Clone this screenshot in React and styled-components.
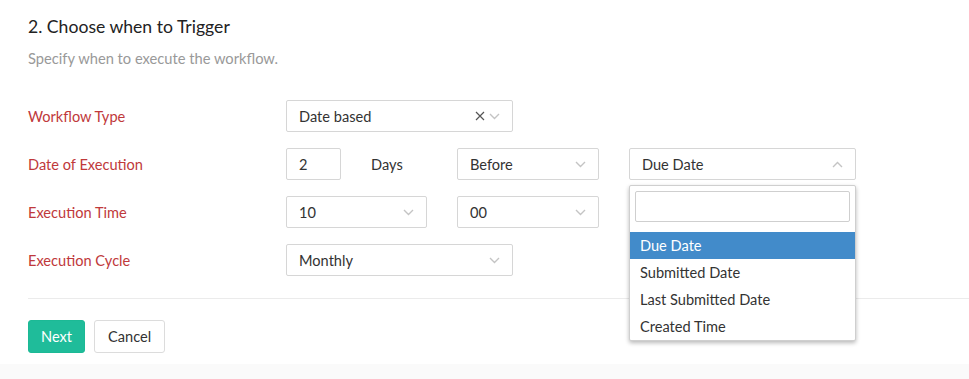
import styled, { createGlobalStyle } from "styled-components";

const GlobalStyle = createGlobalStyle`
  body {
    margin: 0;
    background: #fff;
    font-family: "Lato", "Liberation Sans", sans-serif;
    color: #333;
  }
`;

const Chevron = ({ up }) => (
  <svg width="11" height="7" viewBox="0 0 11 7">
    <path
      d={up ? "M1 6 L5.5 1.5 L10 6" : "M1 1 L5.5 5.5 L10 1"}
      fill="none"
      stroke="#c4c4c4"
      strokeWidth="1.4"
    />
  </svg>
);

const Cross = () => (
  <svg width="10" height="10" viewBox="0 0 10 10">
    <path d="M1 1 L9 9 M9 1 L1 9" stroke="#555" strokeWidth="1.2" />
  </svg>
);

export default function App() {
  return (
    <Page>
      <GlobalStyle />
      <Header>
        <h2>2. Choose when to Trigger</h2>
        <p>Specify when to execute the workflow.</p>
      </Header>

      <Form>
        <Label>Workflow Type</Label>
        <Controls>
          <Select $width={227}>
            <span>Date based</span>
            <Icons>
              <Cross />
              <Chevron />
            </Icons>
          </Select>
        </Controls>

        <Label>Date of Execution</Label>
        <Controls>
          <Cell>
            <NumberBox>2</NumberBox>
            <Unit>Days</Unit>
          </Cell>
          <Select $width={142}>
            <span>Before</span>
            <Chevron />
          </Select>
          <Anchor>
            <Select $width={227}>
              <span>Due Date</span>
              <Chevron up />
            </Select>
            <Dropdown>
              <Search />
              <Options>
                <Option $active>Due Date</Option>
                <Option>Submitted Date</Option>
                <Option>Last Submitted Date</Option>
                <Option>Created Time</Option>
              </Options>
            </Dropdown>
          </Anchor>
        </Controls>

        <Label>Execution Time</Label>
        <Controls>
          <Select $width={141}>
            <span>10</span>
            <Chevron />
          </Select>
          <Select $width={142}>
            <span>00</span>
            <Chevron />
          </Select>
        </Controls>

        <Label>Execution Cycle</Label>
        <Controls>
          <Select $width={227}>
            <span>Monthly</span>
            <Chevron />
          </Select>
        </Controls>
      </Form>

      <Divider />

      <Actions>
        <Button $primary>Next</Button>
        <Button>Cancel</Button>
      </Actions>

      <Footer />
    </Page>
  );
}

const Page = styled.div`
  width: 969px;
  height: 379px;
  overflow: hidden;
  display: flex;
  flex-direction: column;
`;

const Header = styled.div`
  padding: 16px 28px 0;

  h2 {
    margin: 0;
    font-size: 17.6px;
    line-height: 22px;
    font-weight: 400;
    color: #222;
  }

  p {
    margin: 10px 0 0;
    font-size: 14.7px;
    line-height: 20px;
    color: #999;
  }
`;

const Form = styled.div`
  margin-top: 32px;
  padding-left: 28px;
  display: grid;
  grid-template-columns: 258px 1fr;
  row-gap: 16px;
`;

const Label = styled.div`
  height: 32px;
  display: flex;
  align-items: center;
  font-size: 14.6px;
  color: #c0393b;
`;

const Controls = styled.div`
  display: grid;
  grid-template-columns: 141px 142px 227px;
  column-gap: 30px;
  align-items: center;
  height: 32px;
`;

const Cell = styled.div`
  display: flex;
  align-items: center;
`;

const Select = styled.div`
  box-sizing: border-box;
  width: ${(p) => p.$width}px;
  height: 32px;
  border: 1px solid #d6d6d6;
  border-radius: 2px;
  background: #fff;
  display: flex;
  align-items: center;
  justify-content: space-between;
  padding: 0 12px 0 12px;
  font-size: 14.6px;
  color: #333;
`;

const Icons = styled.div`
  display: flex;
  align-items: center;
  gap: 4px;
`;

const NumberBox = styled.div`
  box-sizing: border-box;
  width: 55px;
  height: 32px;
  border: 1px solid #d6d6d6;
  border-radius: 2px;
  display: flex;
  align-items: center;
  padding-left: 12px;
  font-size: 14.6px;
`;

const Unit = styled.span`
  margin-left: 30px;
  font-size: 14.6px;
`;

const Anchor = styled.div`
  position: relative;
`;

const Dropdown = styled.div`
  position: absolute;
  top: 37px;
  left: 0;
  z-index: 2;
  box-sizing: border-box;
  width: 227px;
  background: #fff;
  border: 1px solid #cfcfcf;
  border-radius: 2px;
  box-shadow: 0 2px 4px rgba(0, 0, 0, 0.28);
  padding-top: 5px;
`;

const Search = styled.div`
  box-sizing: border-box;
  margin: 0 5px;
  height: 31px;
  border: 1px solid #cfcfcf;
  border-radius: 2px;
`;

const Options = styled.div`
  margin-top: 10px;
`;

const Option = styled.div`
  height: 27px;
  line-height: 27px;
  padding-left: 10px;
  font-size: 14.6px;
  color: ${(p) => (p.$active ? "#fff" : "#333")};
  background: ${(p) => (p.$active ? "#428bca" : "transparent")};
`;

const Divider = styled.div`
  margin: 22px 0 0 28px;
  height: 1px;
  background: #ebebeb;
`;

const Actions = styled.div`
  margin-top: 21px;
  padding-left: 28px;
  display: flex;
  gap: 9px;
`;

const Button = styled.button`
  height: 33px;
  padding: 0 ${(p) => (p.$primary ? "12px" : "13px")};
  border-radius: 3px;
  font-family: inherit;
  font-size: 14.6px;
  border: 1px solid ${(p) => (p.$primary ? "#1cb995" : "#dcdcdc")};
  background: ${(p) => (p.$primary ? "#1fbc9a" : "#fff")};
  color: ${(p) => (p.$primary ? "#fff" : "#333")};
`;

const Footer = styled.div`
  margin-top: 11px;
  flex: 1;
  background: #fafafa;
`;
